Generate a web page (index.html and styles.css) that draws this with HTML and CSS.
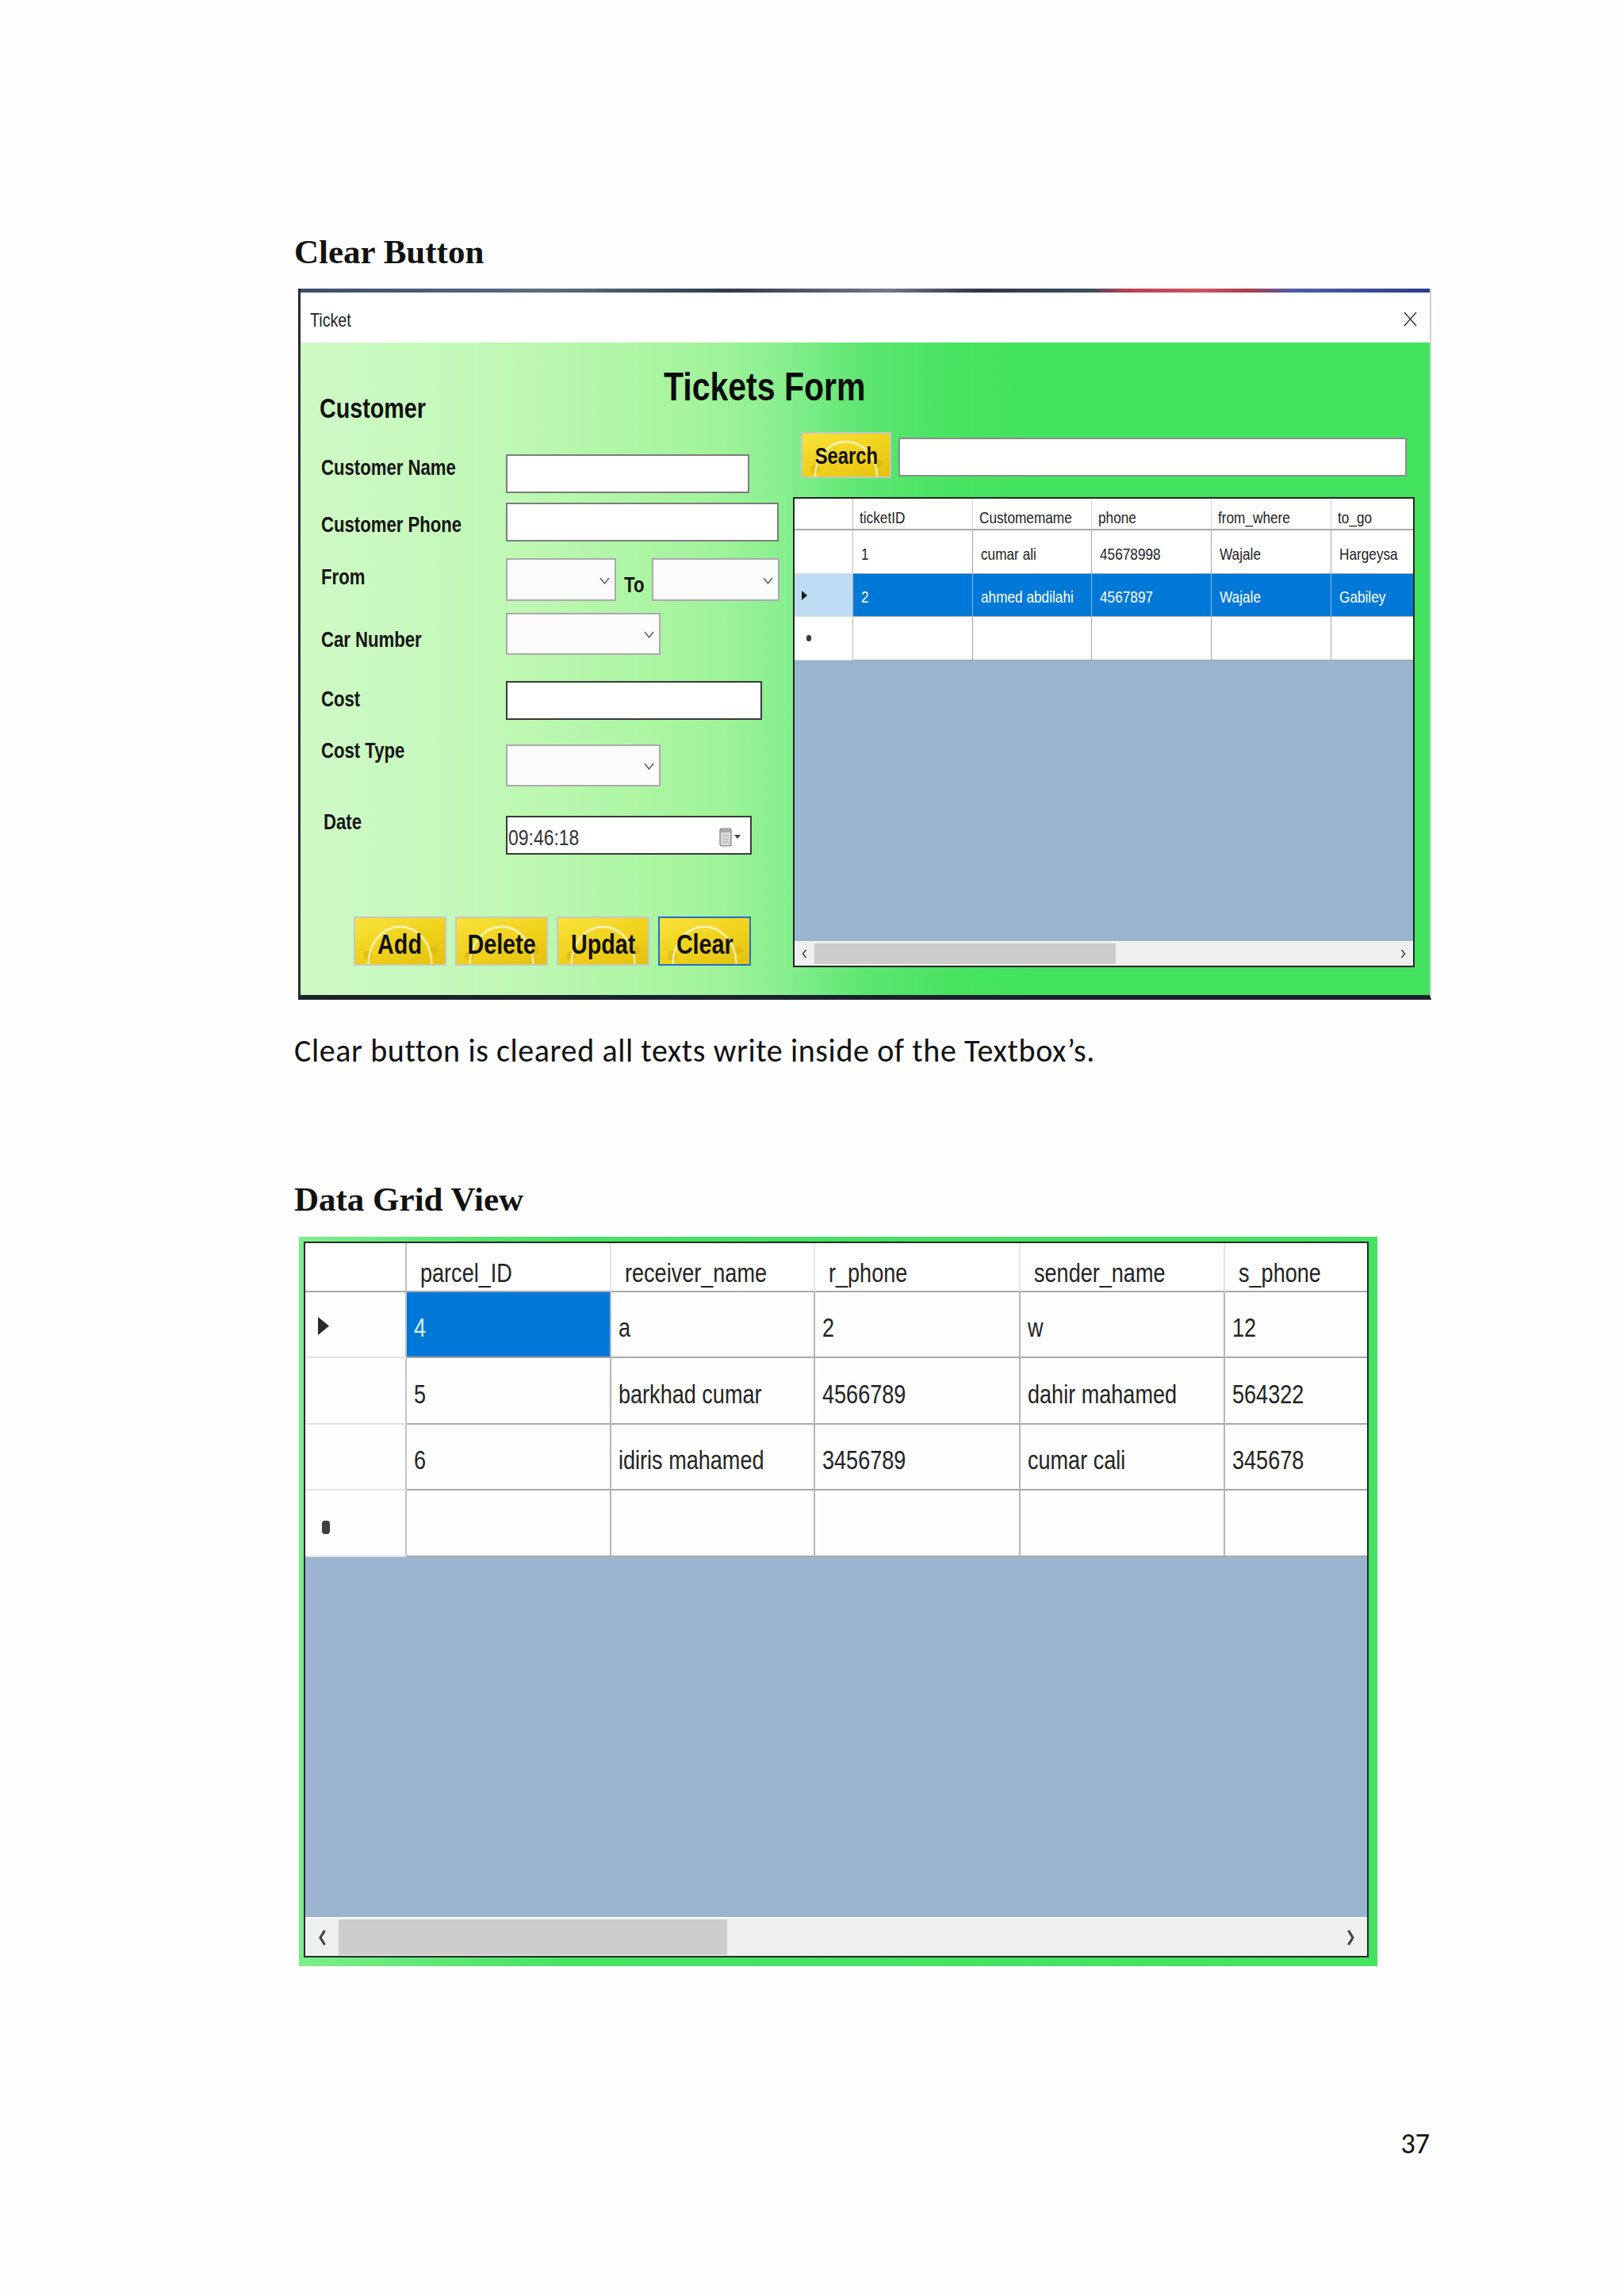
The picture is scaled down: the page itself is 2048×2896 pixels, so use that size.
FILE: index.html
```html
<!DOCTYPE html>
<html lang="en">
<head>
<meta charset="utf-8">
<title>Clear Button / Data Grid View</title>
<link rel="stylesheet" href="styles.css">
</head>
<body>
<div class="page">
  <h2 class="doc-heading">Clear Button</h2>

  <div class="window">
    <div class="win-strip"></div>
    <div class="titlebar">
      <span class="sq">Ticket</span>
      <svg class="win-close" width="17" height="19" viewBox="0 0 17 19"><path d="M1 1 L16 18 M16 1 L1 18" stroke="#2b2b2b" stroke-width="1.4" fill="none"/></svg>
    </div>

    <div class="client">
      <div class="client-head">
        <div class="cust-title"><span class="sq">Customer</span></div>
        <div class="form-title"><span class="sq">Tickets Form</span></div>
      </div>

      <div class="client-body">
        <div class="form-col">
          <div class="frow r-name">
            <div class="flabel"><span class="sq">Customer Name</span></div>
            <div class="textbox tb-name"></div>
          </div>
          <div class="frow r-phone">
            <div class="flabel"><span class="sq">Customer Phone</span></div>
            <div class="textbox tb-phone"></div>
          </div>
          <div class="frow r-from">
            <div class="flabel"><span class="sq">From</span></div>
            <div class="combo cb-from"><svg width="13" height="9" viewBox="0 0 13 9"><path d="M1 1 L6.5 8 L12 1" stroke="#555" stroke-width="1.3" fill="none"/></svg></div>
            <div class="to-label"><span class="sq">To</span></div>
            <div class="combo cb-to"><svg width="13" height="9" viewBox="0 0 13 9"><path d="M1 1 L6.5 8 L12 1" stroke="#555" stroke-width="1.3" fill="none"/></svg></div>
          </div>
          <div class="frow r-car">
            <div class="flabel"><span class="sq">Car Number</span></div>
            <div class="combo cb-car"><svg width="13" height="9" viewBox="0 0 13 9"><path d="M1 1 L6.5 8 L12 1" stroke="#555" stroke-width="1.3" fill="none"/></svg></div>
          </div>
          <div class="frow r-cost">
            <div class="flabel"><span class="sq">Cost</span></div>
            <div class="textbox tb-cost"></div>
          </div>
          <div class="frow r-ctype">
            <div class="flabel"><span class="sq">Cost Type</span></div>
            <div class="combo cb-ctype"><svg width="13" height="9" viewBox="0 0 13 9"><path d="M1 1 L6.5 8 L12 1" stroke="#555" stroke-width="1.3" fill="none"/></svg></div>
          </div>
          <div class="frow r-date">
            <div class="flabel"><span class="sq">Date</span></div>
            <div class="datepick">
              <span class="sq">09:46:18</span>
              <svg class="cal-icon" width="32" height="24" viewBox="0 0 32 24"><rect x="1" y="1" width="14" height="22" rx="2" fill="#d9d9d9" stroke="#7a7a7a" stroke-width="1.2"/><rect x="2" y="2" width="12" height="4" fill="#a9a9a9"/><path d="M4 10 H12 M4 14 H12 M4 18 H12" stroke="#b3b3b3" stroke-width="1"/><path d="M19 9 H27 L23 14 Z" fill="#3c3c3c"/></svg>
            </div>
          </div>
          <div class="btn-row">
            <div class="lemon btn"><span class="sq">Add</span></div>
            <div class="lemon btn"><span class="sq">Delete</span></div>
            <div class="lemon btn"><span class="sq">Updat</span></div>
            <div class="lemon btn btn-focus"><span class="sq">Clear</span></div>
          </div>
        </div>

        <div class="grid-col">
          <div class="search-row">
            <div class="lemon btn-search"><span class="sq">Search</span></div>
            <div class="search-box"></div>
          </div>

          <div class="tgrid">
            <div class="tg-rows">
              <div class="tc th rh"></div>
              <div class="tc th"><span class="sq">ticketID</span></div>
              <div class="tc th"><span class="sq">Customemame</span></div>
              <div class="tc th"><span class="sq">phone</span></div>
              <div class="tc th"><span class="sq">from_where</span></div>
              <div class="tc th last"><span class="sq">to_go</span></div>

              <div class="tc rh"></div>
              <div class="tc"><span class="sq">1</span></div>
              <div class="tc"><span class="sq">cumar ali</span></div>
              <div class="tc"><span class="sq">45678998</span></div>
              <div class="tc"><span class="sq">Wajale</span></div>
              <div class="tc last"><span class="sq">Hargeysa</span></div>

              <div class="tc rh rh-sel"><svg width="7" height="12" viewBox="0 0 7 12"><path d="M0 0 L7 6 L0 12 Z" fill="#1e1e1e"/></svg></div>
              <div class="tc sel"><span class="sq">2</span></div>
              <div class="tc sel"><span class="sq">ahmed abdilahi</span></div>
              <div class="tc sel"><span class="sq">4567897</span></div>
              <div class="tc sel"><span class="sq">Wajale</span></div>
              <div class="tc sel last"><span class="sq">Gabiley</span></div>

              <div class="tc rh"><span class="new-mark"></span></div>
              <div class="tc"></div>
              <div class="tc"></div>
              <div class="tc"></div>
              <div class="tc"></div>
              <div class="tc last"></div>
            </div>
            <div class="tg-fill"></div>
            <div class="tg-scroll">
              <div class="sb-arrow"><svg width="7" height="12" viewBox="0 0 7 12"><path d="M5.5 1 L1.5 6 L5.5 11" stroke="#505050" stroke-width="1.8" fill="none"/></svg></div>
              <div class="sb-thumb"></div>
              <div class="sb-space"></div>
              <div class="sb-arrow"><svg width="7" height="12" viewBox="0 0 7 12"><path d="M1.5 1 L5.5 6 L1.5 11" stroke="#505050" stroke-width="1.8" fill="none"/></svg></div>
            </div>
          </div>
        </div>
      </div>
    </div>
  </div>

  <p class="body-text">Clear button is cleared all texts write inside of the Textbox’s.</p>

  <h2 class="doc-heading dgv-heading">Data Grid View</h2>

  <div class="dgv-frame">
    <div class="dgv">
      <div class="dgv-rows">
        <div class="dc dh drh"></div>
        <div class="dc dh"><span class="sq">parcel_ID</span></div>
        <div class="dc dh"><span class="sq">receiver_name</span></div>
        <div class="dc dh"><span class="sq">r_phone</span></div>
        <div class="dc dh"><span class="sq">sender_name</span></div>
        <div class="dc dh last"><span class="sq">s_phone</span></div>

        <div class="dc drh"><svg width="14" height="23" viewBox="0 0 14 23"><path d="M0 0 L14 11.5 L0 23 Z" fill="#2a2a2a"/></svg></div>
        <div class="dc dsel"><span class="sq">4</span></div>
        <div class="dc"><span class="sq">a</span></div>
        <div class="dc"><span class="sq">2</span></div>
        <div class="dc"><span class="sq">w</span></div>
        <div class="dc last"><span class="sq">12</span></div>

        <div class="dc drh"></div>
        <div class="dc"><span class="sq">5</span></div>
        <div class="dc"><span class="sq">barkhad cumar</span></div>
        <div class="dc"><span class="sq">4566789</span></div>
        <div class="dc"><span class="sq">dahir mahamed</span></div>
        <div class="dc last"><span class="sq">564322</span></div>

        <div class="dc drh"></div>
        <div class="dc"><span class="sq">6</span></div>
        <div class="dc"><span class="sq">idiris mahamed</span></div>
        <div class="dc"><span class="sq">3456789</span></div>
        <div class="dc"><span class="sq">cumar cali</span></div>
        <div class="dc last"><span class="sq">345678</span></div>

        <div class="dc drh"><span class="dnew-mark"></span></div>
        <div class="dc"></div>
        <div class="dc"></div>
        <div class="dc"></div>
        <div class="dc"></div>
        <div class="dc last"></div>
      </div>
      <div class="dgv-fill"></div>
      <div class="dgv-scroll">
        <div class="dsb-arrow"><svg width="11" height="22" viewBox="0 0 11 22"><path d="M8.5 2 L3 11 L8.5 20" stroke="#454545" stroke-width="3.2" fill="none"/></svg></div>
        <div class="dsb-thumb"></div>
        <div class="sb-space"></div>
        <div class="dsb-arrow"><svg width="11" height="22" viewBox="0 0 11 22"><path d="M2.5 2 L8 11 L2.5 20" stroke="#454545" stroke-width="3.2" fill="none"/></svg></div>
      </div>
    </div>
  </div>

  <div class="page-num">37</div>
</div>
</body>
</html>
```

FILE: styles.css
```css
* { box-sizing: border-box; }

html, body {
  margin: 0;
  background: #fefefe;
}

:root {
  --ui: "Liberation Sans", Arial, sans-serif;
  --doc: "Carlito", "Lato", "Liberation Sans", sans-serif;
}

.page {
  width: 2048px;
  height: 2896px;
  padding: 297px 0 0 371px;
}

/* narrow WinForms lettering: the UI face drawn condensed */
.sq {
  display: inline-block;
  white-space: nowrap;
  transform: scaleX(0.82);
  transform-origin: 0 50%;
}

/* document headings */
.doc-heading {
  margin: 0;
  font: bold 43px/42px "Liberation Serif", serif;
  color: #111;
}

.dgv-heading { margin-top: 146px; }

.body-text {
  margin: 45px 0 0 0;
  font: 40px/40px var(--doc);
  letter-spacing: 0.6px;
  color: #111;
}

.page-num {
  width: 1432px;
  margin-top: 206px;
  text-align: right;
  font: 36px/36px var(--doc);
  color: #111;
}

/* ---------- Ticket window ---------- */
.window {
  margin: 25px 0 0 5px;
  width: 1429px;
  border-left: 3px solid #262a30;
  border-right: 2px solid #cfcfcf;
  border-bottom: 6px solid #1a222e;
  background: #fff;
}

.win-strip {
  height: 5px;
  background: linear-gradient(to right,
    #3b4f6c 0%, #5d6d82 22%, #2d3a4c 38%, #6f7b8b 52%, #2a3646 60%,
    #3f4d61 70%, #b8414f 73%, #cc5561 80%, #a8404c 84%, #4b5fa6 88%, #2c3c8a 100%);
}

.titlebar {
  height: 63px;
  display: flex;
  justify-content: space-between;
  align-items: flex-start;
  padding: 23px 16px 0 12px;
  font: 24px/24px var(--ui);
  color: #222;
}

.win-close { margin-top: 1px; }

.client {
  height: 823px;
  background: linear-gradient(to right,
    #cff9c6 0%, #c6f9bc 12%, #bcf7b1 22%, #adf5a4 30%, #a0f39a 37%,
    #86ef8e 43%, #5ce671 50%, #47e361 58%, #42e25e 66%, #42e25e 100%);
}

.client-head {
  height: 108px;
  display: grid;
  grid-template-columns: 458px auto;
  align-items: start;
}

.cust-title {
  margin: 65px 0 0 24px;
  font: bold 35px/35px var(--ui);
  color: #111;
}

.form-title {
  margin-top: 31px;
  font: bold 50px/50px var(--ui);
  color: #0c0c0c;
  white-space: nowrap;
}

.client-body { display: flex; }

/* left: input form */
.form-col {
  width: 621px;
  padding-left: 26px;
}

.frow {
  display: flex;
  align-items: flex-start;
}

.flabel {
  width: 233px;
  font: bold 27px/27px var(--ui);
  color: #151515;
  white-space: nowrap;
}

.r-name  { margin-top: 33px; }
.r-name .flabel  { margin-top: 4px; }
.r-phone { margin-top: 12px; }
.r-phone .flabel { margin-top: 15px; }
.r-from  { margin-top: 21px; }
.r-from .flabel  { margin-top: 11px; }
.r-car   { margin-top: 15px; }
.r-car .flabel   { margin-top: 21px; }
.r-cost  { margin-top: 33px; }
.r-cost .flabel  { margin-top: 10px; }
.r-ctype { margin-top: 31px; }
.r-ctype .flabel { margin-top: -5px; }
.r-date  { margin-top: 37px; }
.r-date .flabel  { margin-top: -5px; padding-left: 3px; }

.textbox {
  height: 49px;
  background: #fff;
  border: 2px solid #7d7d7d;
}

.tb-name  { width: 307px; }
.tb-phone { width: 344px; }
.tb-cost  { width: 323px; border-color: #3a3a3a; }

.combo {
  height: 54px;
  background: #fbfbfb;
  border: 2px solid #aaa;
  display: flex;
  justify-content: flex-end;
  align-items: center;
  padding: 2px 6px 0 0;
}

.cb-from  { width: 139px; }
.cb-to    { width: 161px; }
.cb-car   { width: 195px; height: 53px; }
.cb-ctype { width: 195px; height: 53px; }

.to-label {
  width: 28px;
  margin: 21px 7px 0 10px;
  font: bold 27px/27px var(--ui);
  color: #151515;
}

.datepick {
  width: 310px;
  height: 49px;
  background: #fff;
  border: 2px solid #3a3a3a;
  display: flex;
  justify-content: space-between;
  align-items: flex-start;
  padding: 12px 7px 0 1px;
  font: 28px/28px var(--ui);
  color: #333;
}

.cal-icon { margin-top: 1px; }

/* yellow lemon-textured buttons */
.lemon {
  display: flex;
  align-items: center;
  justify-content: center;
  border: 2px solid #c7c7c2;
  color: #121212;
  font-weight: bold;
  font-family: var(--ui);
  background:
    radial-gradient(ellipse 40% 92% at 50% 100%, transparent 84%, rgba(255, 255, 240, 0.85) 88%, transparent 93%),
    radial-gradient(circle at 14% 82%, rgba(190, 150, 0, 0.3) 0 5%, transparent 6%),
    radial-gradient(circle at 88% 70%, rgba(190, 150, 0, 0.25) 0 4%, transparent 5%),
    linear-gradient(160deg, #f8e23c 0%, #f0d11a 55%, #e5c10e 100%);
}

.lemon .sq { transform-origin: 50% 50%; }

.btn-row {
  margin-top: 78px;
  padding-left: 41px;
  display: flex;
  gap: 11px;
}

.btn {
  width: 117px;
  height: 62px;
  padding-top: 6px;
  font-size: 35px;
  line-height: 35px;
}

.btn-focus { border-color: #1f6fd0; }

/* right: search + grid */
.grid-col { width: 784px; }

.search-row {
  display: flex;
  align-items: flex-start;
  margin-top: 5px;
}

.btn-search {
  margin-left: 10px;
  width: 114px;
  height: 58px;
  padding-top: 3px;
  font-size: 29px;
  line-height: 29px;
}

.search-box {
  margin: 7px 0 0 9px;
  width: 641px;
  height: 49px;
  background: #fff;
  border: 2px solid #8c8c8c;
}

.tgrid {
  margin-top: 24px;
  height: 593px;
  border: 2px solid #242424;
  background: #9ab3cf;
  display: flex;
  flex-direction: column;
}

.tg-rows {
  display: grid;
  grid-template-columns: 74px 151px 150px 151px 151px 103px;
  grid-template-rows: 40px 55px 54px 55px;
}

.tc {
  display: flex;
  align-items: center;
  padding: 4px 0 0 10px;
  background: #fff;
  border-right: 1px solid #a5a5a5;
  border-bottom: 1px solid #a5a5a5;
  font: 21px/21px var(--ui);
  color: #1e1e1e;
  white-space: nowrap;
  overflow: hidden;
}

.tc.th {
  padding: 8px 0 0 8px;
  border-right-color: #d9d9d9;
  border-bottom: 2px solid #a8a8a8;
}

.tc.rh {
  padding: 0 0 0 9px;
  border-right-color: #b9b9b9;
  border-bottom-color: #dcdcdc;
}

.tc.th.rh { border-bottom: 2px solid #a8a8a8; }

.tc.rh-sel { background: #bddcf3; }

.tc.sel {
  background: #0078d7;
  color: #fff;
  border-right-color: #8fb8e4;
}

.tc.last { border-right: none; }

.new-mark {
  display: block;
  width: 6px;
  height: 8px;
  margin-left: 6px;
  border-radius: 3px;
  background: #3a3a3a;
}

.tg-fill { flex: 1; }

.tg-scroll {
  height: 31px;
  display: flex;
  align-items: stretch;
  background: #efefef;
  border-top: 1px solid #f8f8f8;
}

.sb-arrow {
  width: 25px;
  display: flex;
  align-items: center;
  justify-content: center;
}

.sb-thumb {
  width: 380px;
  margin: 2px 0;
  background: #cdcdcd;
}

.sb-space { flex: 1; }

/* ---------- stand-alone DataGridView ---------- */
.dgv-frame {
  margin: 26px 0 0 6px;
  width: 1360px;
  height: 920px;
  padding: 6px 11px 11px 6px;
  background: linear-gradient(to right, #7cef88 0%, #5fe874 12%, #46e362 25%, #43e25f 100%);
}

.dgv {
  height: 100%;
  border: 2px solid #262b2b;
  background: #9bb4d0;
  display: flex;
  flex-direction: column;
}

.dgv-rows {
  display: grid;
  grid-template-columns: 128px 258px 257px 259px 258px 179px;
  grid-template-rows: 62px 83px 84px 83px 84px;
}

.dc {
  display: flex;
  align-items: center;
  padding: 8px 0 0 9px;
  background: #fefefe;
  border-right: 2px solid #b6b6b6;
  border-bottom: 2px solid #a9a9a9;
  font: 33px/33px var(--ui);
  color: #232323;
  white-space: nowrap;
  overflow: hidden;
}

.dc.dh {
  padding: 14px 0 0 17px;
  background: #fff;
  border-right-color: #e4e4e4;
  border-bottom-color: #a9a9a9;
}

.dc.drh {
  padding: 4px 0 0 16px;
  border-right-color: #c2c2c2;
  border-bottom-color: #e2e2e2;
}

.dc.dh.drh { border-bottom-color: #a9a9a9; }

.dc.dsel {
  background: #0078d7;
  color: #dfeeff;
}

.dc.last { border-right: none; }

.dnew-mark {
  display: block;
  width: 10px;
  height: 17px;
  margin: 6px 0 0 5px;
  border-radius: 4px;
  background: #3f3f3f;
}

.dgv-fill { flex: 1; }

.dgv-scroll {
  height: 49px;
  display: flex;
  align-items: stretch;
  background: #eeefef;
  border-top: 2px solid #f9f9f9;
}

.dsb-arrow {
  width: 42px;
  display: flex;
  align-items: center;
  justify-content: center;
}

.dsb-thumb {
  width: 490px;
  margin: 1px 0;
  background: #cdcdcd;
}
```
